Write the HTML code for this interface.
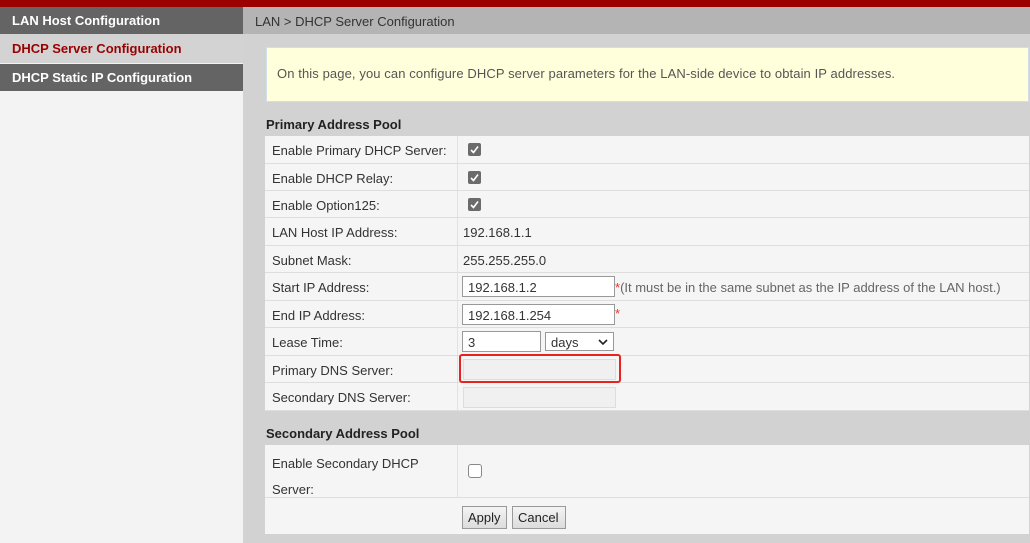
<!DOCTYPE html>
<html><head><style>
*{margin:0;padding:0;box-sizing:border-box}
body{width:1030px;height:543px;overflow:hidden;background:#d2d2d2;font-family:"Liberation Sans",Arial,sans-serif;font-size:13px;color:#333;position:relative}
.a{position:absolute}
.top{left:0;top:0;width:1030px;height:7px;background:#9b0000}
.side{left:0;top:7px;width:243px;height:536px;background:#f3f3f3}
.si{position:absolute;left:0;width:243px;padding-left:12px;font-weight:bold;font-size:13px;color:#fff;background:#646464}
.crumb{left:243px;top:7px;width:787px;height:27px;background:#b4b4b4;color:#333;font-size:13px;padding:7px 0 0 12px}
.info{left:266px;top:47px;width:763px;height:55px;background:#ffffdc;border:1px solid #cfe0ea;padding:18px 0 0 10px;color:#555;font-size:13px;letter-spacing:0.1px}
.h{left:266px;font-weight:bold;font-size:13px;color:#222}
.row{position:absolute;left:265px;width:764px;background:#f5f5f5;border-bottom:1px solid #dedede}
.row .l{position:absolute;left:7px;top:7px;color:#333}
.row .v{position:absolute;left:198px;top:7px}
.row:before{content:"";position:absolute;left:192px;top:0;bottom:0;width:1px;background:#e2e2e2}
.cb{position:absolute;left:203px;top:7px;width:13px;height:13px;background:#6b6b6b;border-radius:2px}
.cb svg{position:absolute;left:2px;top:2px}
.inp{position:absolute;left:197px;top:3px;height:21px;border:1px solid #999;background:#fff;padding:3px 0 0 5px;font-size:13px}
.dis{background:#f0f0f0;border:1px solid #ddd}
.star{color:#e33}
.btn{position:absolute;top:8px;height:23px;border:1px solid #999;background:linear-gradient(#f4f4f4,#dcdcdc);font-size:13px;padding:3px 5px 0;color:#222}
.nb:before{display:none}
</style></head><body>
<div class="a top"></div>
<div class="a side"></div>
<div class="si" style="top:7px;height:27px;padding-top:6px">LAN Host Configuration</div>
<div class="si" style="top:34px;height:29px;padding-top:7px;background:#d3d3d3;color:#9b0000">DHCP Server Configuration</div>
<div class="si" style="top:64px;height:27px;padding-top:6px">DHCP Static IP Configuration</div>
<div class="a crumb">LAN &gt; DHCP Server Configuration</div>
<div class="a info">On this page, you can configure DHCP server parameters for the LAN-side device to obtain IP addresses.</div>
<div class="a h" style="top:117px">Primary Address Pool</div>

<div class="row" style="top:136px;height:28px"><span class="l">Enable Primary DHCP Server:</span><span class="cb"><svg width="9" height="9"><path d="M1 5 L3.5 7.5 L8 1.5" stroke="#fff" stroke-width="1.6" fill="none"/></svg></span></div>
<div class="row" style="top:164px;height:27px"><span class="l">Enable DHCP Relay:</span><span class="cb"><svg width="9" height="9"><path d="M1 5 L3.5 7.5 L8 1.5" stroke="#fff" stroke-width="1.6" fill="none"/></svg></span></div>
<div class="row" style="top:191px;height:27px"><span class="l">Enable Option125:</span><span class="cb"><svg width="9" height="9"><path d="M1 5 L3.5 7.5 L8 1.5" stroke="#fff" stroke-width="1.6" fill="none"/></svg></span></div>
<div class="row" style="top:218px;height:28px"><span class="l">LAN Host IP Address:</span><span class="v">192.168.1.1</span></div>
<div class="row" style="top:246px;height:27px"><span class="l">Subnet Mask:</span><span class="v">255.255.255.0</span></div>
<div class="row" style="top:273px;height:28px"><span class="l">Start IP Address:</span><span class="inp" style="width:153px">192.168.1.2</span><span class="a" style="left:350px;top:7px;color:#666"><span class="star">*</span>(It must be in the same subnet as the IP address of the LAN host.)</span></div>
<div class="row" style="top:301px;height:27px"><span class="l">End IP Address:</span><span class="inp" style="width:153px">192.168.1.254</span><span class="a star" style="left:350px;top:5px">*</span></div>
<div class="row" style="top:328px;height:28px"><span class="l">Lease Time:</span><span class="inp" style="width:79px">3</span><span class="inp" style="left:280px;width:69px;height:19px;top:4px;padding-top:2px">days<svg class="a" style="left:52px;top:6px" width="10" height="7"><path d="M1 1 L5 5 L9 1" stroke="#222" stroke-width="1.6" fill="none"/></svg></span></div>
<div class="row" style="top:356px;height:27px"><span class="l">Primary DNS Server:</span><span class="inp dis" style="width:153px;left:198px;top:3px"></span></div>
<div class="row" style="top:383px;height:28px"><span class="l">Secondary DNS Server:</span><span class="inp dis" style="width:153px;left:198px;top:4px"></span></div>
<div class="a" style="left:459px;top:354px;width:162px;height:29px;border:2px solid #e8231f;border-radius:3px"></div>

<div class="a h" style="top:426px">Secondary Address Pool</div>
<div class="row" style="top:445px;height:53px"><span class="l" style="top:6px;line-height:26px">Enable Secondary DHCP<br>Server:</span><span style="position:absolute;left:203px;top:19px;width:14px;height:14px;border:1px solid #888;border-radius:3px;background:#fff"></span></div>
<div class="row nb" style="top:498px;height:36px;border:none"><span class="btn" style="left:197px">Apply</span><span class="btn" style="left:247px;width:54px">Cancel</span></div>
</body></html>
